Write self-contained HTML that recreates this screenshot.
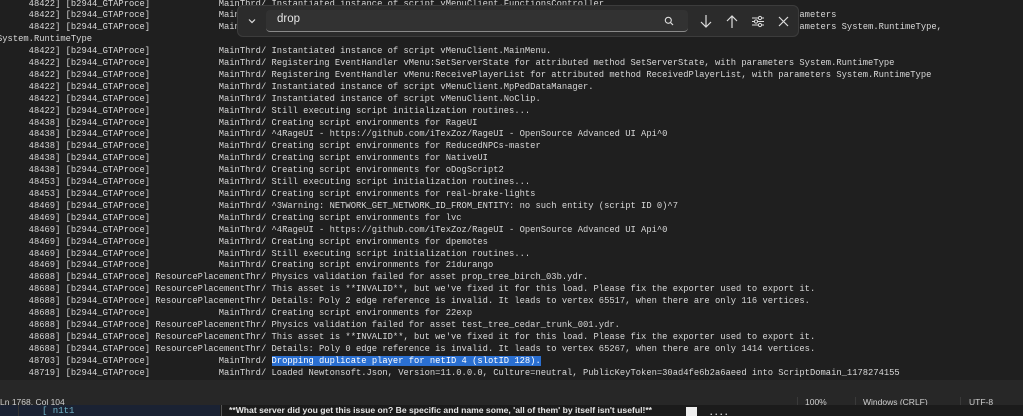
<!DOCTYPE html>
<html><head><meta charset="utf-8"><style>
html,body{margin:0;padding:0;width:1023px;height:416px;overflow:hidden;background:#1f1f1f;position:relative}
pre{position:absolute;left:-3px;top:-1.5px;margin:0;font-family:"Liberation Mono",monospace;font-size:8.8px;line-height:11.9px;color:#d8d8d8}
.hl{background:#2a6fd1;color:#fff}
#find{position:absolute;left:237px;top:5px;width:562px;height:32px;background:#2b2b2b;border:1px solid #3c3c3c;border-radius:6px;box-sizing:border-box}
#inp{position:absolute;left:28px;top:4px;width:422px;height:22px;background:#323232;border-radius:4px;border-bottom:1px solid #8a8a8a;box-sizing:border-box;font:11.5px "Liberation Sans",sans-serif;color:#e6e6e6;padding:3px 0 0 11px}
#status{position:absolute;left:0;top:380px;width:1023px;height:25px;background:#272727;font:8.5px "Liberation Sans",sans-serif;color:#cfcfcf}
#bot{position:absolute;left:0;top:405px;width:1023px;height:11px;background:#1b1b1b}
</style></head><body>
<pre>      48422] [b2944_GTAProce]             MainThrd/ Instantiated instance of script vMenuClient.FunctionsController
      48422] [b2944_GTAProce]             MainThrd/ Registering EventHandler vMenu:SomeEvent for attributed method                                   parameters
      48422] [b2944_GTAProce]             MainThrd/ Registering EventHandler vMenu:SomeEvent for attributed method                                   parameters System.RuntimeType,
System.RuntimeType
      48422] [b2944_GTAProce]             MainThrd/ Instantiated instance of script vMenuClient.MainMenu.
      48422] [b2944_GTAProce]             MainThrd/ Registering EventHandler vMenu:SetServerState for attributed method SetServerState, with parameters System.RuntimeType
      48422] [b2944_GTAProce]             MainThrd/ Registering EventHandler vMenu:ReceivePlayerList for attributed method ReceivedPlayerList, with parameters System.RuntimeType
      48422] [b2944_GTAProce]             MainThrd/ Instantiated instance of script vMenuClient.MpPedDataManager.
      48422] [b2944_GTAProce]             MainThrd/ Instantiated instance of script vMenuClient.NoClip.
      48422] [b2944_GTAProce]             MainThrd/ Still executing script initialization routines...
      48438] [b2944_GTAProce]             MainThrd/ Creating script environments for RageUI
      48438] [b2944_GTAProce]             MainThrd/ ^4RageUI - https://github.com/iTexZoz/RageUI - OpenSource Advanced UI Api^0
      48438] [b2944_GTAProce]             MainThrd/ Creating script environments for ReducedNPCs-master
      48438] [b2944_GTAProce]             MainThrd/ Creating script environments for NativeUI
      48438] [b2944_GTAProce]             MainThrd/ Creating script environments for oDogScript2
      48453] [b2944_GTAProce]             MainThrd/ Still executing script initialization routines...
      48453] [b2944_GTAProce]             MainThrd/ Creating script environments for real-brake-lights
      48469] [b2944_GTAProce]             MainThrd/ ^3Warning: NETWORK_GET_NETWORK_ID_FROM_ENTITY: no such entity (script ID 0)^7
      48469] [b2944_GTAProce]             MainThrd/ Creating script environments for lvc
      48469] [b2944_GTAProce]             MainThrd/ ^4RageUI - https://github.com/iTexZoz/RageUI - OpenSource Advanced UI Api^0
      48469] [b2944_GTAProce]             MainThrd/ Creating script environments for dpemotes
      48469] [b2944_GTAProce]             MainThrd/ Still executing script initialization routines...
      48469] [b2944_GTAProce]             MainThrd/ Creating script environments for 21durango
      48688] [b2944_GTAProce] ResourcePlacementThr/ Physics validation failed for asset prop_tree_birch_03b.ydr.
      48688] [b2944_GTAProce] ResourcePlacementThr/ This asset is **INVALID**, but we've fixed it for this load. Please fix the exporter used to export it.
      48688] [b2944_GTAProce] ResourcePlacementThr/ Details: Poly 2 edge reference is invalid. It leads to vertex 65517, when there are only 116 vertices.
      48688] [b2944_GTAProce]             MainThrd/ Creating script environments for 22exp
      48688] [b2944_GTAProce] ResourcePlacementThr/ Physics validation failed for asset test_tree_cedar_trunk_001.ydr.
      48688] [b2944_GTAProce] ResourcePlacementThr/ This asset is **INVALID**, but we've fixed it for this load. Please fix the exporter used to export it.
      48688] [b2944_GTAProce] ResourcePlacementThr/ Details: Poly 0 edge reference is invalid. It leads to vertex 65267, when there are only 1414 vertices.
      48703] [b2944_GTAProce]             MainThrd/ <span class="hl">Dropping duplicate player for netID 4 (slotID 128).</span>
      48719] [b2944_GTAProce]             MainThrd/ Loaded Newtonsoft.Json, Version=11.0.0.0, Culture=neutral, PublicKeyToken=30ad4fe6b2a6aeed into ScriptDomain_1178274155</pre>

<div id="find">
  <svg style="position:absolute;left:9px;top:11px" width="10" height="8" viewBox="0 0 10 8"><path d="M2 2.5 L5 5.5 L8 2.5" stroke="#ddd" stroke-width="1.2" fill="none"/></svg>
  <div id="inp">drop
    <svg style="position:absolute;right:14px;top:6px" width="10" height="10" viewBox="0 0 10 10"><circle cx="4.3" cy="4.3" r="3" stroke="#ddd" stroke-width="1.1" fill="none"/><path d="M6.5 6.5 L9 9" stroke="#ddd" stroke-width="1.2"/></svg>
  </div>
  <svg style="position:absolute;left:461px;top:8px" width="14" height="15" viewBox="0 0 14 15"><path d="M7 1 V13 M2 8 L7 13 L12 8" stroke="#ddd" stroke-width="1.2" fill="none"/></svg>
  <svg style="position:absolute;left:487px;top:8px" width="14" height="15" viewBox="0 0 14 15"><path d="M7 14 V2 M2 7 L7 2 L12 7" stroke="#ddd" stroke-width="1.2" fill="none"/></svg>
  <svg style="position:absolute;left:513px;top:9px" width="14" height="13" viewBox="0 0 14 13"><path d="M1 3 H13 M1 6.5 H13 M1 10 H13" stroke="#ddd" stroke-width="1.1"/><circle cx="9" cy="3" r="1.6" fill="#2b2b2b" stroke="#ddd"/><circle cx="5" cy="6.5" r="1.6" fill="#2b2b2b" stroke="#ddd"/><circle cx="9" cy="10" r="1.6" fill="#2b2b2b" stroke="#ddd"/></svg>
  <svg style="position:absolute;left:540px;top:10px" width="11" height="11" viewBox="0 0 11 11"><path d="M1 1 L10 10 M10 1 L1 10" stroke="#ddd" stroke-width="1.2"/></svg>
</div>

<div id="status">
  <span style="position:absolute;left:0;top:17px">Ln 1768, Col 104</span>
  <span style="position:absolute;left:797px;top:17px;width:1px;height:10px;background:#3a3a3a"></span>
  <span style="position:absolute;left:805px;top:17px">100%</span>
  <span style="position:absolute;left:855px;top:17px;width:1px;height:10px;background:#3a3a3a"></span>
  <span style="position:absolute;left:863px;top:17px">Windows (CRLF)</span>
  <span style="position:absolute;left:960px;top:17px;width:1px;height:10px;background:#3a3a3a"></span>
  <span style="position:absolute;left:969px;top:17px">UTF-8</span>
</div>
<div id="bot">
  <div style="position:absolute;left:0;top:0;width:220px;height:11px;background:#1a2233"></div>
  <div style="position:absolute;left:18px;top:0;width:1px;height:11px;background:#333"></div>
  <div style="position:absolute;left:42px;top:1px;font:9px 'Liberation Mono',monospace;color:#6fb3c8">[ n1t1</div>
  <div style="position:absolute;left:221px;top:0;width:1px;height:11px;background:#555"></div>
  <div style="position:absolute;left:229px;top:0px;font:bold 8.6px 'Liberation Sans',sans-serif;color:#e8e8e8;white-space:nowrap">**What server did you get this issue on? Be specific and name some, 'all of them' by itself isn't useful!**</div>
  <div style="position:absolute;left:686px;top:2px;width:11px;height:9px;background:#eee"></div>
  <div style="position:absolute;left:710px;top:2px;font:bold 9px 'Liberation Sans',sans-serif;color:#ddd;white-space:nowrap">. . . .</div>
</div>
</body></html>
